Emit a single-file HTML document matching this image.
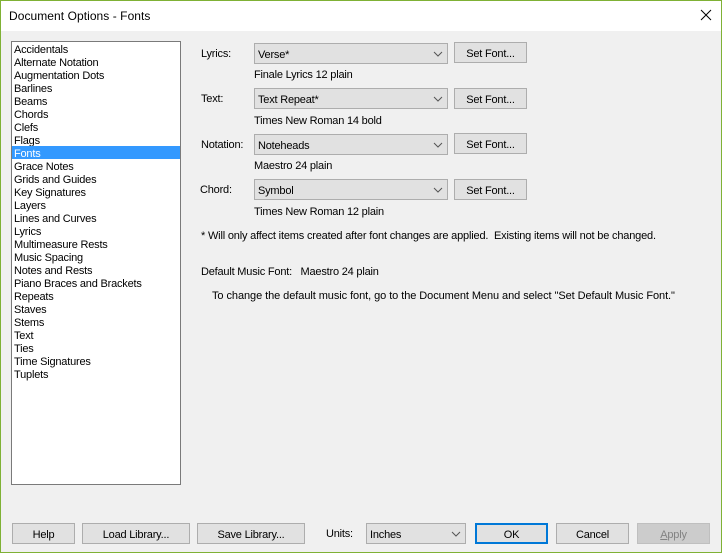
<!DOCTYPE html>
<html><head><meta charset="utf-8"><title>Document Options - Fonts</title>
<style>
html,body{margin:0;padding:0}
body{width:722px;height:553px;overflow:hidden;position:relative;background:#f0f0f0;font-family:"Liberation Sans",sans-serif;font-size:11px;letter-spacing:-.2px;color:#000}
.a,.t,.b,.c{position:absolute;box-sizing:border-box}
.t{white-space:pre;line-height:15px;height:15px}
.b,.c{background:#e1e1e1;border:1px solid #adadad;height:21px;line-height:22px}
.b{text-align:center}
.c{padding-left:3px}
.c svg{position:absolute;right:4px;top:7px}
#list{left:11px;top:41px;width:170px;height:444px;background:#fff;border:1px solid #7a7a7a}
#list div{position:absolute;left:2px;height:13px;line-height:17px;white-space:pre}
#list .sel{left:0;width:168px;background:#3399ff;color:#fff;padding-left:2px;box-sizing:border-box}
</style></head><body>
<div class="a" style="left:0;top:0;width:722px;height:31px;background:#fff"></div>
<div class="t" style="left:9px;top:9px;font-size:12px;letter-spacing:.06px;line-height:15px;height:15px">Document Options - Fonts</div>
<svg class="a" style="left:700px;top:9px" width="12" height="12" viewBox="0 0 12 12"><path d="M1 1L11 11M11 1L1 11" stroke="#000" stroke-width="1" fill="none"/></svg>

<div class="a" id="list">
<div style="top:0">Accidentals</div>
<div style="top:13px">Alternate Notation</div>
<div style="top:26px">Augmentation Dots</div>
<div style="top:39px">Barlines</div>
<div style="top:52px">Beams</div>
<div style="top:65px">Chords</div>
<div style="top:78px">Clefs</div>
<div style="top:91px">Flags</div>
<div class="sel" style="top:104px">Fonts</div>
<div style="top:117px">Grace Notes</div>
<div style="top:130px">Grids and Guides</div>
<div style="top:143px">Key Signatures</div>
<div style="top:156px">Layers</div>
<div style="top:169px">Lines and Curves</div>
<div style="top:182px">Lyrics</div>
<div style="top:195px">Multimeasure Rests</div>
<div style="top:208px">Music Spacing</div>
<div style="top:221px">Notes and Rests</div>
<div style="top:234px">Piano Braces and Brackets</div>
<div style="top:247px">Repeats</div>
<div style="top:260px">Staves</div>
<div style="top:273px">Stems</div>
<div style="top:286px">Text</div>
<div style="top:299px">Ties</div>
<div style="top:312px">Time Signatures</div>
<div style="top:325px">Tuplets</div>
</div>

<div class="t" style="left:201px;top:47px">Lyrics:</div>
<div class="c" style="left:254px;top:43px;width:194px">Verse*<svg width="10" height="6" viewBox="0 0 10 6"><path d="M1 1L5 5L9 1" stroke="#555" fill="none"/></svg></div>
<div class="b" style="left:454px;top:42px;width:73px">Set Font...</div>
<div class="t" style="left:254px;top:68px">Finale Lyrics 12 plain</div>

<div class="t" style="left:201px;top:92px">Text:</div>
<div class="c" style="left:254px;top:88px;width:194px">Text Repeat*<svg width="10" height="6" viewBox="0 0 10 6"><path d="M1 1L5 5L9 1" stroke="#555" fill="none"/></svg></div>
<div class="b" style="left:454px;top:88px;width:73px">Set Font...</div>
<div class="t" style="left:254px;top:114px">Times New Roman 14 bold</div>

<div class="t" style="left:201px;top:138px">Notation:</div>
<div class="c" style="left:254px;top:134px;width:194px">Noteheads<svg width="10" height="6" viewBox="0 0 10 6"><path d="M1 1L5 5L9 1" stroke="#555" fill="none"/></svg></div>
<div class="b" style="left:454px;top:133px;width:73px">Set Font...</div>
<div class="t" style="left:254px;top:159px">Maestro 24 plain</div>

<div class="t" style="left:200px;top:183px">Chord:</div>
<div class="c" style="left:254px;top:179px;width:194px">Symbol<svg width="10" height="6" viewBox="0 0 10 6"><path d="M1 1L5 5L9 1" stroke="#555" fill="none"/></svg></div>
<div class="b" style="left:454px;top:179px;width:73px">Set Font...</div>
<div class="t" style="left:254px;top:205px">Times New Roman 12 plain</div>

<div class="t" style="left:201px;top:229px;letter-spacing:-.18px">* Will only affect items created after font changes are applied.  Existing items will not be changed.</div>
<div class="t" style="left:201px;top:265px">Default Music Font:   Maestro 24 plain</div>
<div class="t" style="left:212px;top:289px;letter-spacing:-.07px">To change the default music font, go to the Document Menu and select "Set Default Music Font."</div>

<div class="b" style="left:12px;top:523px;width:63px">Help</div>
<div class="b" style="left:82px;top:523px;width:108px">Load Library...</div>
<div class="b" style="left:197px;top:523px;width:108px">Save Library...</div>
<div class="t" style="left:326px;top:527px">Units:</div>
<div class="c" style="left:366px;top:523px;width:100px">Inches<svg width="10" height="6" viewBox="0 0 10 6"><path d="M1 1L5 5L9 1" stroke="#555" fill="none"/></svg></div>
<div class="b" style="left:475px;top:523px;width:73px;border:2px solid #0078d7;line-height:20px">OK</div>
<div class="b" style="left:556px;top:523px;width:73px">Cancel</div>
<div class="b" style="left:637px;top:523px;width:73px;background:#cccccc;border-color:#bfbfbf;color:#838383"><span style="text-decoration:underline">A</span>pply</div>

<div class="a" style="left:0;top:0;width:722px;height:553px;border:1px solid #7fb135"></div>
</body></html>
